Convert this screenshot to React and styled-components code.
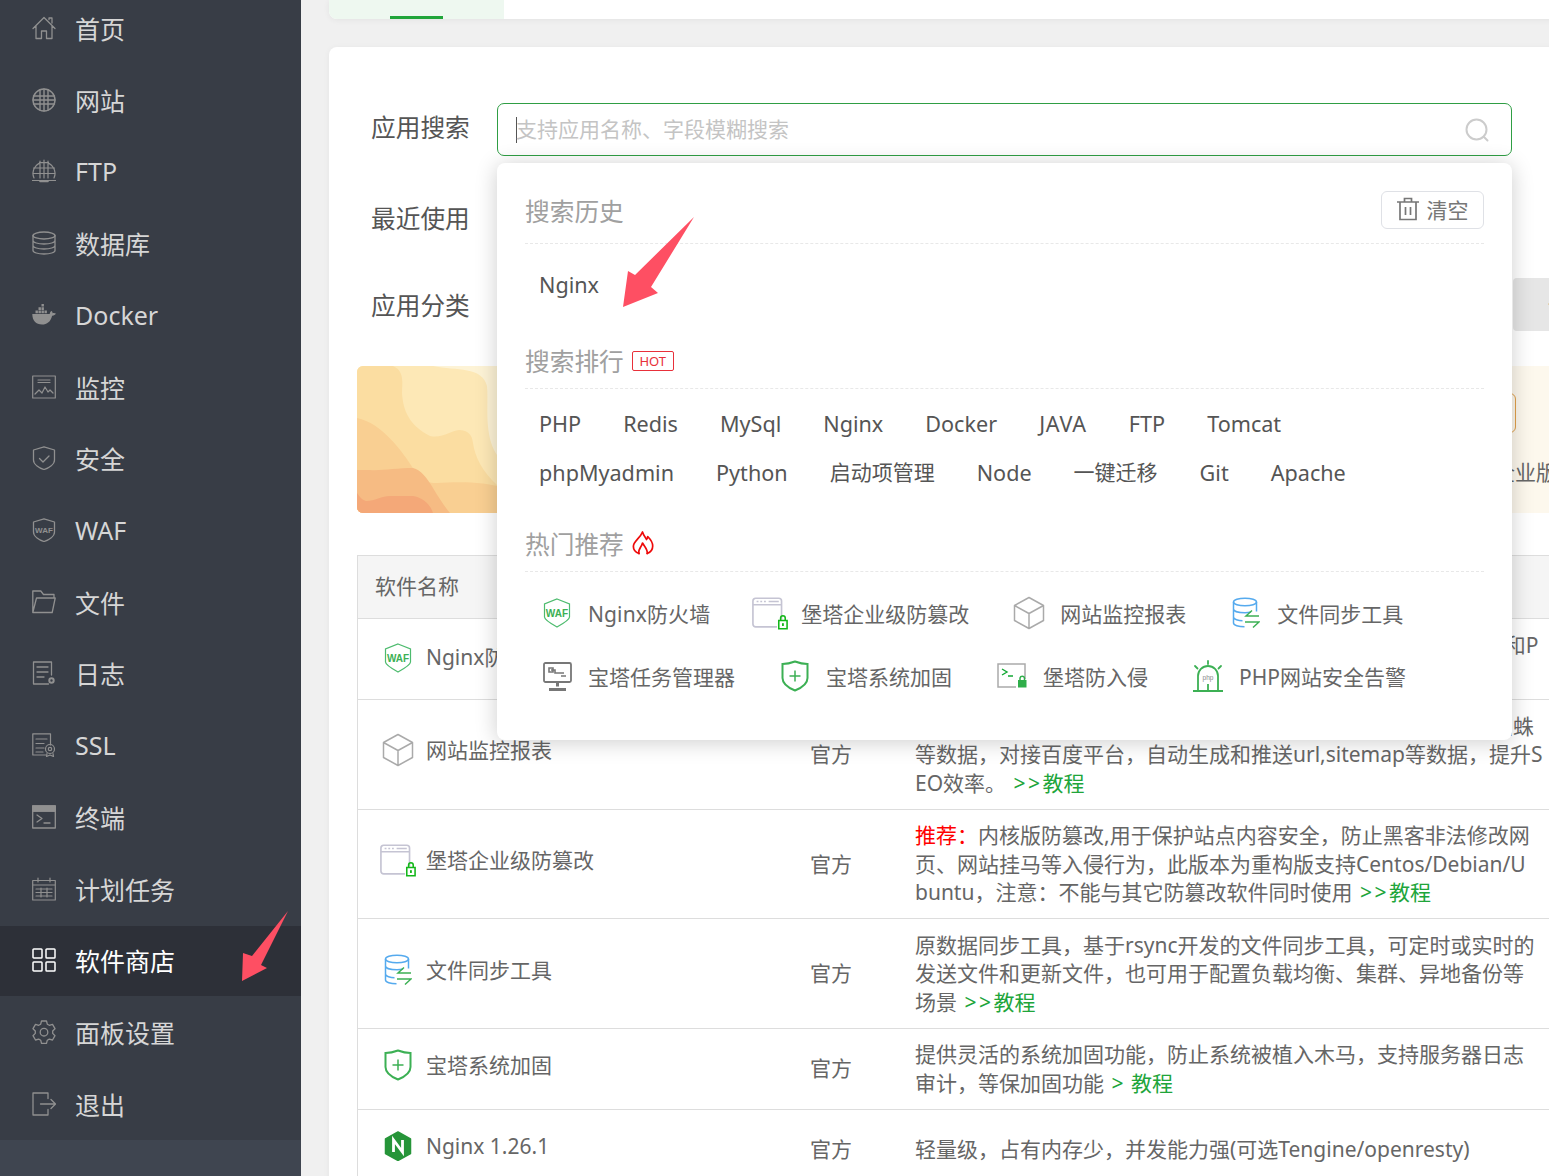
import React from 'react'
import styled, { createGlobalStyle } from 'styled-components'

const GlobalStyle = createGlobalStyle`
  html, body { margin: 0; padding: 0; }
  body { font-family: "Noto Sans", "Noto Sans CJK SC", sans-serif; color: #666; background: #f0f0f0; }
  * { box-sizing: border-box; }
`

// ---- drawn icons ----
const Line = ({ children, size = 24, sw = 1.3 }) => (
  <svg width={size} height={size} viewBox="0 0 24 24" fill="none" stroke="currentColor" strokeWidth={sw} strokeLinecap="round" strokeLinejoin="round">{children}</svg>
)

const HomeIcon = () => <Line><path d="M1 12.5 12 1.5l11 11M4 10v12.500h5.500V15h5v7.500h5.500V10M17 3.500V2h3v5" /></Line>
const GlobeIcon = () => <Line sw={1.400}><circle cx="12" cy="12" r="11" /><path d="M1.500 8h21M1 12h22M1.500 16h21M8 1.800v20.400M12 1v22M16 1.800v20.400" /></Line>
const FtpIcon = () => <Line sw={1.200}><path d="M2 19a11 11 0 1 1 20 0M1.500 9h21M1 14.500h22M8 2v17M16 2v17M12 1v18M0.500 21.500h23" /><path d="M8 22.500h8" strokeWidth="1.600" /></Line>
const DbIcon = () => <Line><ellipse cx="12" cy="4.500" rx="11" ry="3.500" /><path d="M1 4.500v15c0 2 5 3.500 11 3.500s11-1.500 11-3.500v-15M1 9.500c0 2 5 3.500 11 3.500s11-1.500 11-3.500M1 14.500c0 2 5 3.500 11 3.500s11-1.500 11-3.500" /></Line>
const DockerIcon = () => (
  <svg width="24" height="24" viewBox="0 -1 24 24" fill="currentColor">
    <path d="M0.300 10h17.400c.2-1.800 1-2.800 2-3 .6.700.9 1.500.9 2.300 1-.4 2.400-.3 3.300.3-.8 1.500-2.200 2.200-3.800 2.100C18.800 17.600 15 20.500 10 20.500 4 20.500.300 16.500.300 10z" />
    <path d="M3.500 6.500h2.400v2.700H3.500zM6.500 6.500h2.400v2.700H6.500zM9.500 6.500h2.400v2.700H9.500zM12.500 6.500h2.400v2.700h-2.400zM6.500 3.200h2.400v2.700H6.500zM9.500 3.200h2.400v2.700H9.500zM9.500 0h2.400v2.600H9.500z" />
  </svg>
)
const MonitorIcon = () => <Line sw={1.200}><path d="M.7 1h22.600v22H.7zM6 5h12M6 7.500h12" /><path d="m3 19 4-4 3 3 3-6 3 5 2-2 3 3" /></Line>
const ShieldCheckIcon = () => <Line><path d="M12 .8 22.500 4v10c0 4.500-6 8-10.500 9.500C7.500 22 1.500 18.500 1.500 14V4z" /><path d="m7.500 12.500 3.500 3.500 6-6" /></Line>
const WafShieldIcon = () => (
  <Line>
    <path d="M12 .8 22.500 4v10c0 4.500-6 8-10.500 9.500C7.500 22 1.500 18.500 1.500 14V4z" />
    <text x="12" y="14.500" textAnchor="middle" fontSize="8" fontWeight="700" fill="currentColor" stroke="none" fontFamily="Liberation Sans, sans-serif">WAF</text>
  </Line>
)
const FolderIcon = () => <Line><path d="M.8 22.500V1h8l2.700 3.500h10.500v3M.8 22.500 4.500 8h18.700l-3 14.500z" /></Line>
const LogIcon = () => <Line><path d="M19.500 14V1H1.500v22h15M5 6h11M5 11h11M5 16h7" /><circle cx="19.500" cy="19.500" r="2.200" strokeWidth="2" /></Line>
const SslIcon = () => <Line sw={1.200}><path d="M18.500 12V.8H.8V22h13M4 6h11M4 10.500h8M4 15h8M4 19h7" /><circle cx="18" cy="16" r="4.500" /><circle cx="18" cy="16" r="1.700" /><path d="m15 20.500-.5 3 3.500-1.500 3.500 1.500-.5-3" /></Line>
const TerminalIcon = () => <Line><path d="M.7 1h22.600v22H.7zM.7 6h22.600" /><path d="M.7 1h22.600v5H.7z" fill="currentColor" /><path d="m5 10 5 3.500-5 3.500M12 18h6" strokeWidth="1.300" /></Line>
const CalendarIcon = () => <Line sw={1.200}><path d="M.7 3.500h22.600v19.500H.7zM.7 8h22.600M6 1v4M18 1v4M4 12h16M4 15.500h16M4 19h16M9 11v9M15 11v9" /></Line>
const GridIcon = () => <Line sw={1.500}><rect x="1" y="1" width="9" height="9" rx=".8" /><rect x="14" y="1" width="9" height="9" rx=".8" /><rect x="1" y="14" width="9" height="9" rx=".8" /><rect x="14" y="14" width="9" height="9" rx=".8" /></Line>
const GearIcon = () => (
  <Line>
    <path d="M9.500 1h5l.8 3.200 2 1.100 3.200-.9 2.500 4.300-2.300 2.300v2.400l2.300 2.300-2.500 4.300-3.200-.9-2 1.100-.8 3.200h-5l-.8-3.200-2-1.100-3.200.9L1 15.700 3.300 13.400V11L1 8.700l2.500-4.300 3.200.9 2-1.100z" />
    <circle cx="12" cy="12.200" r="3.800" />
  </Line>
)
const LogoutIcon = () => <Line><path d="M16 6.500V1H1v22h15v-5.500M8.500 12h15M19 7.500l4.500 4.500-4.500 4.500" /></Line>

const SearchIcon = () => (
  <svg width="24" height="24" viewBox="0 0 24 24" fill="none" stroke="#ccc" strokeWidth="2" strokeLinecap="round"><circle cx="11.500" cy="11.500" r="10" /><path d="m19 19 3.500 3.500" /></svg>
)
const TrashIcon = () => (
  <svg width="22" height="24" viewBox="0 0 22 24" fill="none" stroke="#777" strokeWidth="1.700"><path d="M0 5h22M3 5v17.500h16V5M7.500 5V1.500h7V5M8.500 10v8M13.500 10v8" /></svg>
)
const FlameIcon = () => (
  <svg width="22" height="24" viewBox="0 0 22 24" fill="none" stroke="#ee0a0a" strokeWidth="1.700" strokeLinejoin="round" strokeLinecap="round">
    <path d="M7 22.500C3 21 1 18 1.500 14.500 2 10 8 7.500 10.500 1c1 3.500 3 5 4 7.500.8-.8 1.200-1.800 1.200-3 3 3 5 6 5 9.500 0 3.500-2 6.200-5.500 7.500" />
    <path d="M7 22.500c-1.500-4 2.500-6 3.500-10.500 1.500 3 5.500 6.500 4.700 10.500" />
  </svg>
)

const WafIcon = () => (
  <svg width="28" height="30" viewBox="0 0 28 30" fill="none" stroke="#4dbb6e" strokeWidth="1.200">
    <path d="M14 1 26.500 6v13c0 3-8 7.500-12.500 10C9.500 26.500 1.500 22 1.500 19V6z" />
    <text x="14" y="19" textAnchor="middle" fontSize="10" fontWeight="700" fill="#3cb054" stroke="none" fontFamily="Liberation Sans, sans-serif">WAF</text>
  </svg>
)
const WindowLockIcon = () => (
  <svg width="39" height="35" viewBox="0 0 39 35" fill="none">
    <path d="M27 32H4a3 3 0 0 1-3-3V4a3 3 0 0 1 3-3h25a3 3 0 0 1 3 3v20M1 8h31" stroke="#c5c4d3" strokeWidth="1.800" />
    <path d="M5 4.500h2M9 4.500h2M13 4.500h2M18 4.500h11" stroke="#c5c4d3" strokeWidth="1.500" />
    <path d="M29 25h9v9h-9zM31 25v-2.500a2.500 2.500 0 0 1 5 0V25" stroke="#14b71a" strokeWidth="1.700" />
    <rect x="32.500" y="28" width="2" height="3" fill="#14b71a" />
  </svg>
)
const CubeIcon = () => (
  <svg width="32" height="34" viewBox="0 0 32 34" fill="none" stroke="#aaa" strokeWidth="1.500" strokeLinejoin="round">
    <path d="M16 1.500 30.500 9.500v15L16 32.500 1.500 24.500v-15zM1.500 9.500 16 17.500l14.500-8M16 17.500v15" />
  </svg>
)
const SyncDbIcon = () => (
  <svg width="28" height="32" viewBox="0 0 28 32" fill="none" strokeWidth="1.500">
    <g stroke="#55aaee">
      <ellipse cx="13" cy="5" rx="11.500" ry="3.800" />
      <path d="M1.500 5v21c0 2.200 5 3.800 11 3.800M24.500 5v9.500M1.500 12c0 2.200 5 3.800 11.500 3.800 2.500 0 4-.2 6-.8M1.500 20c0 2.200 5 3.800 9 3.800" />
    </g>
    <path d="M27 19H14l6-5.500M13 25h14l-6 5.500" stroke="#3cb054" />
  </svg>
)
const ShieldPlusIcon = () => (
  <svg width="28" height="32" viewBox="0 0 28 32" fill="none" stroke="#3cb054" strokeWidth="2">
    <path d="M14 1.500c4 1.500 8 2.500 12.500 2.500v14c0 6-7.500 10.500-12.500 12.500C9 28.500 1.500 24 1.500 18V4C6 4 10 3 14 1.500z" />
    <path d="M14 10.500v11M8.500 16h11" strokeWidth="1.500" />
  </svg>
)
const TaskIcon = () => (
  <svg width="29" height="29" viewBox="0 0 29 29" fill="none" stroke="#777">
    <rect x="1" y="1" width="27" height="19" rx="1.500" strokeWidth="1.800" />
    <path d="M8 8h4v3h9M18 14h5M6 6h4v4H6z" strokeWidth="1.600" />
    <path d="M14.500 20v4.500M6 27.500h17" strokeWidth="3" />
  </svg>
)
const TerminalLockIcon = () => (
  <svg width="30" height="26" viewBox="0 0 30 26" fill="none">
    <path d="M19 24H1V1h27v15" stroke="#aaa" strokeWidth="1.500" />
    <path d="m5 6 5 3-5 3M11 13h5" stroke="#13a835" strokeWidth="1.400" />
    <path d="M21 17h8.500v7.500H21z" fill="#2fae4a" />
    <path d="M23 17v-2a2.300 2.300 0 0 1 4.500 0v2" stroke="#2fae4a" strokeWidth="1.500" />
  </svg>
)
const AlarmIcon = () => (
  <svg width="32" height="33" viewBox="0 0 32 33" fill="none" stroke="#3cb054" strokeWidth="1.800">
    <path d="M6 30V16a10 10 0 0 1 20 0v14M1 31h30" />
    <path d="M16 1v3M3 6l2.500 2.500M29 6l-2.500 2.500" strokeLinecap="round" />
    <path d="M16 24v6" />
    <text x="16" y="20" textAnchor="middle" fontSize="6.500" fill="#888" stroke="none" fontFamily="Liberation Sans, sans-serif">php</text>
  </svg>
)
const NginxIcon = () => (
  <svg width="28" height="30" viewBox="0 0 28 30">
    <path d="M14 1 26.500 8v14.500L14 29.500 1.500 22.500V8z" fill="#269539" stroke="#269539" strokeLinejoin="round" strokeWidth="1.500" />
    <path d="M9.500 21V9l9 12V9" fill="none" stroke="#fff" strokeWidth="2.800" />
  </svg>
)

const PointerArrow = ({ points, w, h }) => (
  <svg width={w} height={h} viewBox={`0 0 ${w} ${h}`}><polygon points={points} fill="#fe4f63" /></svg>
)

const WaveArt = () => (
  <svg width="160" height="147" viewBox="0 0 160 147">
    <rect width="160" height="147" fill="#fde8b6" />
    <path d="M76 0c24 5 49 0 54 20 2 20-5 55 15 75h15V0z" fill="#fdf3d6" />
    <path d="M0 0h36c12 5 9 18 9 27 1 18 8 33 28 43 12 3 22-6 30-6 9 1 12 5 13 13 2 14 9 28 24 42l20 6v22H0z" fill="#fbdda1" />
    <path d="M0 52c25 5 45 33 58 53 5 10 12 12 22 12 20-1 45-3 80 8v22H0z" fill="#f9cf92" />
    <path d="M0 104h13c10 1 27-2 43-2 8 2 14 10 20 20 6 10 11 18 17 25H0z" fill="#f6bb83" />
    <path d="M0 127c4 6 7 8 10 8 7 0 15-5 23-5h23c8 1 17 7 20 17H0z" fill="#f4a878" />
  </svg>
)

// ---- sidebar ----
const Page = styled.div`
  display: flex;
  width: 1549px;
  height: 1176px;
  overflow: hidden;
`
const Sidebar = styled.aside`
  flex: none;
  width: 301px;
  background: #3f4550;
`
const Menu = styled.ul`
  display: flex;
  flex-direction: column;
  gap: 1.730px;
  list-style: none;
  margin: -6px 0 0;
  padding: 0;
  background: #383d46;
`
const MenuItem = styled.li`
  position: relative;
  display: flex;
  align-items: center;
  gap: 19px;
  height: 70px;
  padding: 0 0 2px 32px;
  font-size: 25px;
  color: ${p => (p.$active ? '#fff' : '#d6d6d6')};
  background: ${p => (p.$active ? '#2d3038' : 'transparent')};
`
const MenuIcon = styled.span`
  display: flex;
  width: 24px;
  height: 24px;
  color: ${p => (p.$active ? '#fff' : '#909090')};
`
const SideArrow = styled.span`
  position: absolute;
  left: 242px;
  top: -15px;
  display: flex;
`

// ---- main ----
const Main = styled.main`
  flex: 1;
  min-width: 0;
  padding-left: 28px;
`
const TopCard = styled.div`
  display: flex;
  width: 1300px;
  height: 19px;
  margin-bottom: 28px;
  background: #fff;
  border-radius: 0 0 8px 8px;
  box-shadow: 0 1px 6px rgba(0, 0, 0, 0.06);
`
const ActiveTab = styled.div`
  display: flex;
  justify-content: center;
  align-items: flex-end;
  width: 175px;
  background: #eef8f0;
  border-radius: 0 0 0 8px;
`
const TabLine = styled.span`
  width: 53px;
  height: 3px;
  background: #20a53a;
`
const Card = styled.section`
  width: 1300px;
  height: 1200px;
  padding: 56px 0 0 28px;
  background: #fff;
  border-radius: 8px;
  box-shadow: 0 1px 6px rgba(0, 0, 0, 0.05);
`
const FilterRow = styled.div`
  display: flex;
  align-items: center;
  height: 53px;
  margin-bottom: ${p => p.$mb}px;
`
const FilterLabel = styled.label`
  flex: none;
  width: 140px;
  padding: 0 0 ${p => p.$lift}px 14px;
  font-size: 24.700px;
  color: #555;
`
const SearchField = styled.div`
  position: relative;
  flex: none;
  width: 1015px;
  height: 53px;
  z-index: 5;
`
const SearchBox = styled.div`
  display: flex;
  align-items: center;
  height: 100%;
  padding: 0 22px 0 18px;
  border: 1px solid #2f9e44;
  border-radius: 7px;
  background: #fff;
`
const Caret = styled.span`
  flex: none;
  width: 1px;
  height: 26px;
  margin-right: -1px;
  background: #555;
`
const SearchInput = styled.input`
  flex: 1;
  min-width: 0;
  padding: 0 0 2px;
  border: 0;
  outline: 0;
  font: inherit;
  font-size: 21px;
  background: transparent;
  &::placeholder { color: #c4c4c4; opacity: 1; }
`
const Popup = styled.div`
  position: absolute;
  left: 0;
  top: 60px;
  width: 1015px;
  height: 577px;
  padding: 28px;
  background: #fff;
  border-radius: 8px;
  box-shadow: 0 2px 22px rgba(0, 0, 0, 0.2);
`
const PopupArrow = styled.span`
  position: absolute;
  left: 126px;
  top: 54px;
  display: flex;
`
const SectionHead = styled.div`
  display: flex;
  justify-content: space-between;
  align-items: flex-start;
  padding-bottom: ${p => p.$pb}px;
  border-bottom: 1px dashed #e8e8e8;
`
const SectionTitle = styled.div`
  display: flex;
  align-items: center;
  gap: 8px;
  height: 38px;
  font-size: 24.700px;
  color: #a0a0a0;
`
const HotBadge = styled.span`
  display: flex;
  align-items: center;
  justify-content: center;
  width: 42px;
  height: 20px;
  margin-top: 2px;
  border: 1px solid #e8303a;
  border-radius: 2px;
  font-size: 13px;
  color: #e8303a;
`
const ClearButton = styled.button`
  display: flex;
  align-items: center;
  justify-content: center;
  gap: 8px;
  width: 103px;
  height: 38px;
  padding: 0 0 2px;
  border: 1px solid #dfe1e6;
  border-radius: 6px;
  background: #fff;
  font: inherit;
  font-size: 21px;
  color: #777;
`
const TagList = styled.div`
  display: flex;
  flex-wrap: wrap;
  column-gap: 42px;
  max-width: ${p => p.$max}px;
  padding: ${p => p.$pt}px 0 ${p => p.$pb}px 14px;
`
const Tag = styled.span`
  height: 49px;
  line-height: 47px;
  font-size: ${p => (p.$cjk ? 21 : 21.6)}px;
  letter-spacing: ${p => p.$ls || 0}px;
  color: #555;
`
const RecList = styled.div`
  display: flex;
  flex-wrap: wrap;
  column-gap: 42px;
  padding: 10.500px 0 0 14px;
`
const RecItem = styled.div`
  display: flex;
  align-items: center;
  gap: 13px;
  height: 63px;
  padding-bottom: 2px;
  font-size: 21px;
  letter-spacing: ${p => p.$ls || 0}px;
  color: #666;
`
const RecIcon = styled.span`
  display: flex;
  justify-content: center;
  align-items: center;
  width: 36px;
`
const CategoryRow = styled.div`
  display: flex;
  flex: none;
`
const Category = styled.span`
  flex: none;
  width: 127px;
  height: 53px;
  padding-left: 35px;
  line-height: 53px;
  font-size: 21px;
  white-space: nowrap;
  color: #666;
  border-radius: 4px;
  background: ${p => (p.$active ? '#e6e6e6' : 'transparent')};
`
const Banner = styled.div`
  display: flex;
  height: 147px;
  margin-bottom: 42px;
  background: #fdf8ed;
  border-radius: 6px;
  overflow: hidden;
`
const BannerArt = styled.div`
  flex: none;
  display: flex;
  width: 160px;
`
const BannerBody = styled.div`
  flex: 1;
  padding-top: 27px;
`
const UpgradeButton = styled.span`
  display: block;
  width: 122px;
  height: 40px;
  margin: 0 0 25px 877px;
  border: 1px solid #e2a04a;
  border-radius: 6px;
`
const BannerText = styled.div`
  padding-left: 977px;
  font-size: 21px;
  line-height: 28px;
  color: #666;
  white-space: nowrap;
`
const Table = styled.div`
  border-top: 1px solid #ddd;
  border-left: 1px solid #ddd;
`
const HeadRow = styled.div`
  display: grid;
  grid-template-columns: 452px 105px 1fr;
  align-items: center;
  height: 63px;
  padding-bottom: 4px;
  background: #f5f5f5;
  border-bottom: 1px solid #ddd;
  font-size: 21px;
  color: #666;
`
const HeadName = styled.span`
  padding-left: 17px;
`
const Row = styled.div`
  display: grid;
  grid-template-columns: 452px 105px 628px;
  align-items: center;
  min-height: 81px;
  padding: 11.500px 0;
  border-bottom: 1px solid #ddd;
  font-size: 21px;
  line-height: 28.500px;
  color: #666;
`
const NameCell = styled.div`
  display: flex;
  align-items: center;
  gap: 10px;
  padding: 0 0 ${p => p.$lift}px 22px;
`
const NameIcon = styled.span`
  display: flex;
  justify-content: center;
  align-items: center;
  width: 36px;
`
const Desc = styled.div`
  white-space: pre-line;
  word-break: break-all;
`
const Recommend = styled.span`
  color: #f00;
`
const Guide = styled.span`
  margin-left: 2px;
  color: #20a53a;
`
const GuideArrow = styled.span`
  letter-spacing: ${p => p.$ls}px;
`

const menu = [
  ['首页', HomeIcon], ['网站', GlobeIcon], ['FTP', FtpIcon], ['数据库', DbIcon], ['Docker', DockerIcon],
  ['监控', MonitorIcon], ['安全', ShieldCheckIcon], ['WAF', WafShieldIcon], ['文件', FolderIcon], ['日志', LogIcon],
  ['SSL', SslIcon], ['终端', TerminalIcon], ['计划任务', CalendarIcon], ['软件商店', GridIcon, true],
  ['面板设置', GearIcon], ['退出', LogoutIcon],
]

const hotTags = ['PHP', 'Redis', 'MySql', 'Nginx', 'Docker', 'JAVA', 'FTP', 'Tomcat', 'phpMyadmin', 'Python', '启动项管理', 'Node', '一键迁移', 'Git', 'Apache']

const recommends = [
  ['Nginx防火墙', WafIcon], ['堡塔企业级防篡改', WindowLockIcon], ['网站监控报表', CubeIcon], ['文件同步工具', SyncDbIcon],
  ['宝塔任务管理器', TaskIcon], ['宝塔系统加固', ShieldPlusIcon], ['堡塔防入侵', TerminalLockIcon], ['PHP网站安全告警', AlarmIcon],
]

const categories = ['全部', '已安装', '运行环境', '系统工具', '宝塔插件', '专业版', '企业版', '第三方', '一键部署']

const rows = [
  { name: 'Nginx防火墙', Icon: WafIcon, lift: 3, text: '有效防止sql注入/xss/ 一句话木马等常见渗透攻击，过滤CC攻击和PHP漏洞，支持自定义防护规则' },
  { name: '网站监控报表', Icon: CubeIcon, lift: 8, text: '实时精确统计网站流量、IP、UV、PV、请求、用户地区、爬虫蜘蛛等数据，对接百度平台，自动生成和推送url,sitemap等数据，提升SEO效率。 ', arrow: '>>', arrowLs: 2.5 },
  { name: '堡塔企业级防篡改', Icon: WindowLockIcon, lift: 7, hot: '推荐：', text: '内核版防篡改,用于保护站点内容安全，防止黑客非法修改网页、网站挂马等入侵行为，此版本为重构版支持Centos/Debian/U\nbuntu，注意：不能与其它防篡改软件同时使用 ', arrow: '>>', arrowLs: 2.5 },
  { name: '文件同步工具', Icon: SyncDbIcon, lift: 7, text: '原数据同步工具，基于rsync开发的文件同步工具，可定时或实时的发送文件和更新文件，也可用于配置负载均衡、集群、异地备份等场景 ', arrow: '>>', arrowLs: 2.5 },
  { name: '宝塔系统加固', Icon: ShieldPlusIcon, lift: 7, text: '提供灵活的系统加固功能，防止系统被植入木马，支持服务器日志审计，等保加固功能 ', arrow: '> ', arrowLs: 1 },
  { name: 'Nginx 1.26.1', Icon: NginxIcon, lift: 7, text: '轻量级，占有内存少，并发能力强(可选Tengine/openresty)' },
]

export default function App() {
  return (
    <Page>
      <GlobalStyle />
      <Sidebar>
        <Menu>
          {menu.map(([label, Icon, active]) => (
            <MenuItem key={label} $active={active}>
              <MenuIcon $active={active}><Icon /></MenuIcon>
              {label}
              {active && (
                <SideArrow>
                  <PointerArrow w={46} h={70} points="46,0 10,45 1,42 0,70 25,57 19,54" />
                </SideArrow>
              )}
            </MenuItem>
          ))}
        </Menu>
      </Sidebar>
      <Main>
        <TopCard>
          <ActiveTab><TabLine /></ActiveTab>
        </TopCard>
        <Card>
          <FilterRow $mb={36}>
            <FilterLabel $lift={8}>应用搜索</FilterLabel>
            <SearchField>
              <SearchBox>
                <Caret />
                <SearchInput placeholder="支持应用名称、字段模糊搜索" readOnly />
                <SearchIcon />
              </SearchBox>
              <Popup>
                <SectionHead $pb={14}>
                  <SectionTitle>搜索历史</SectionTitle>
                  <ClearButton><TrashIcon />清空</ClearButton>
                </SectionHead>
                <TagList $max={850} $pt={16.5} $pb={31.5}>
                  <Tag>Nginx</Tag>
                </TagList>
                <SectionHead $pb={9}>
                  <SectionTitle>搜索排行<HotBadge>HOT</HotBadge></SectionTitle>
                </SectionHead>
                <TagList $max={850} $pt={10.5} $pb={26.5}>
                  {hotTags.map(t => <Tag key={t} $cjk={/[^\x00-\x7f]/.test(t)} $ls={t === 'JAVA' ? 0.75 : 0}>{t}</Tag>)}
                </TagList>
                <SectionHead $pb={9}>
                  <SectionTitle>热门推荐<FlameIcon /></SectionTitle>
                </SectionHead>
                <RecList>
                  {recommends.map(([label, Icon]) => (
                    <RecItem key={label} $ls={label.startsWith('Nginx') ? 0.12 : 0}>
                      <RecIcon><Icon /></RecIcon>
                      {label}
                    </RecItem>
                  ))}
                </RecList>
                <PopupArrow>
                  <PointerArrow w={71} h={90} points="71,0 12,58 5,54 0,90 35,76 28,70" />
                </PopupArrow>
              </Popup>
            </SearchField>
          </FilterRow>
          <FilterRow $mb={33}>
            <FilterLabel $lift={4}>最近使用</FilterLabel>
          </FilterRow>
          <FilterRow $mb={35}>
            <FilterLabel $lift={2}>应用分类</FilterLabel>
            <CategoryRow>
              {categories.map((c, i) => <Category key={c} $active={i === categories.length - 1}>{c}</Category>)}
            </CategoryRow>
          </FilterRow>
          <Banner>
            <BannerArt><WaveArt /></BannerArt>
            <BannerBody>
              <UpgradeButton />
              <BannerText>企业版</BannerText>
            </BannerBody>
          </Banner>
          <Table>
            <HeadRow>
              <HeadName>软件名称</HeadName>
              <span>开发商</span>
              <span>说明</span>
            </HeadRow>
            {rows.map(({ name, Icon, lift, hot, text, arrow, arrowLs }) => (
              <Row key={name}>
                <NameCell $lift={lift}>
                  <NameIcon><Icon /></NameIcon>
                  {name}
                </NameCell>
                <span>官方</span>
                <Desc>
                  {hot && <Recommend>{hot}</Recommend>}
                  {text}
                  {arrow && <Guide><GuideArrow $ls={arrowLs}>{arrow}</GuideArrow>教程</Guide>}
                </Desc>
              </Row>
            ))}
          </Table>
        </Card>
      </Main>
    </Page>
  )
}
